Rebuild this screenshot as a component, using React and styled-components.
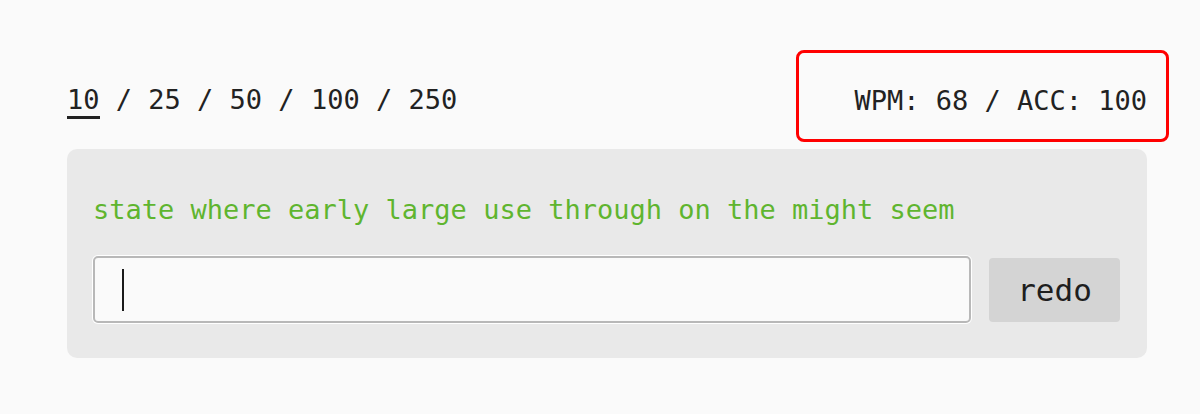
import React from 'react'
import styled, { createGlobalStyle } from 'styled-components'

const GlobalStyle = createGlobalStyle`
  html, body {
    margin: 0;
    padding: 0;
    background: #fafafa;
  }
  body {
    font-family: "DejaVu Sans Mono", "Liberation Mono", monospace;
    color: #222;
  }
`

const Page = styled.div`
  width: 1080px;
  margin-left: 67px;
  padding-top: 50px;
`

const Header = styled.div`
  display: flex;
  justify-content: space-between;
  align-items: center;
  height: 92px;
`

const Nav = styled.div`
  display: flex;
  font-size: 27px;
  line-height: 32px;
  margin-top: 10px;
  white-space: pre;
`

const Count = styled.span`
  border-bottom: ${p => (p.active ? '3px solid #222' : '3px solid transparent')};
`

const Stats = styled.div`
  box-sizing: border-box;
  height: 92px;
  margin-right: -22px;
  padding: 10px 19px 0 55px;
  border: 3px solid #ff0000;
  border-radius: 8px;
  display: flex;
  align-items: center;
  font-size: 27px;
  line-height: 32px;
  white-space: pre;
`

const Card = styled.div`
  margin-top: 7px;
  box-sizing: border-box;
  height: 209px;
  padding: 45px 27px 35px 26px;
  background: #e9e9e9;
  border-radius: 10px;
`

const Words = styled.div`
  color: #5fb52f;
  font-size: 27px;
  line-height: 32px;
  white-space: pre;
`

const Row = styled.div`
  margin-top: 30px;
  display: flex;
  align-items: center;
  gap: 18px;
`

const Field = styled.div`
  flex: 1;
  box-sizing: border-box;
  height: 67px;
  padding-left: 27px;
  display: flex;
  align-items: center;
  background: #fafafa;
  border: 2px solid #b8b8b8;
  border-radius: 5px;
  box-shadow: 0 0 0 1px #ffffff;
`

const Caret = styled.span`
  width: 2px;
  height: 42px;
  background: #1a1a1a;
`

const Redo = styled.button`
  width: 131px;
  height: 64px;
  border: none;
  border-radius: 4px;
  background: #d4d4d4;
  color: #1e1e1e;
  font-family: "DejaVu Sans Mono", "Liberation Mono", monospace;
  font-size: 31px;
  padding: 0;
  cursor: pointer;
`

const counts = [10, 25, 50, 100, 250]

const App = () => {
  return (
    <>
      <GlobalStyle />
      <Page>
        <Header>
          <Nav>
            {counts.map((c, i) => (
              <React.Fragment key={c}>
                {i > 0 && ' / '}
                <Count active={i === 0}>{c}</Count>
              </React.Fragment>
            ))}
          </Nav>
          <Stats>WPM: 68 / ACC: 100</Stats>
        </Header>
        <Card>
          <Words>state where early large use through on the might seem</Words>
          <Row>
            <Field>
              <Caret />
            </Field>
            <Redo>redo</Redo>
          </Row>
        </Card>
      </Page>
    </>
  )
}

export default App
